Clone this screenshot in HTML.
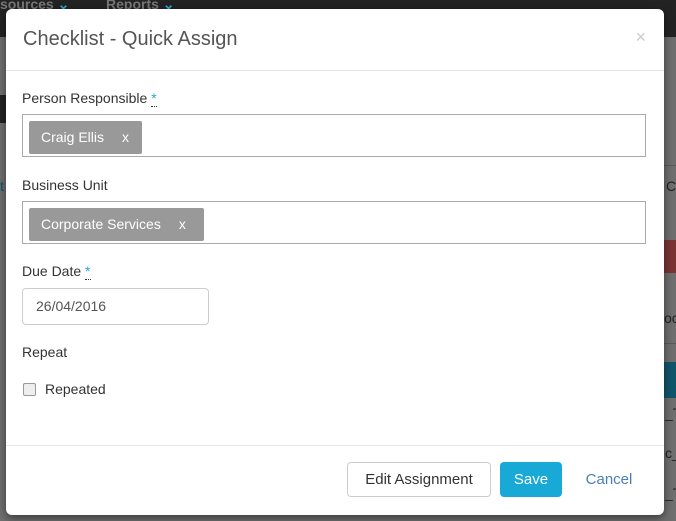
<!DOCTYPE html><html><head><style>
body{margin:0;width:676px;height:521px;overflow:hidden;background:#6f6f6f;font-family:"Liberation Sans",sans-serif;position:relative}
.nav{position:absolute;left:0;top:0;width:676px;height:37px;background:#232323;color:#777;font-size:14px;font-weight:bold}
.m{position:absolute;left:6px;top:9px;width:658px;height:506px;background:#fff;border-radius:6px;box-shadow:0 3px 9px rgba(0,0,0,.5)}
.t{position:absolute;left:17px;top:19px;font-size:20px;color:#555}
.x{position:absolute;right:18px;top:18px;font-size:18px;color:#ccc}
.hr{position:absolute;left:0;width:658px;height:1px;background:#e5e5e5}
.l{position:absolute;left:16px;font-size:14px;color:#333}
.s{color:#29a6d9;border-bottom:1px dotted #333}
.box{position:absolute;left:16px;width:622px;height:41px;border:1px solid #aaa}
.chip{position:absolute;left:6px;top:6px;height:33px;background:#999;color:#fff;border-radius:2px;font-size:14px;line-height:33px;padding:0 12px;box-sizing:border-box}
.chip b{font-weight:normal;margin-left:18px}
.in{position:absolute;left:16px;top:279px;border:1px solid #ccc;border-radius:4px;font-size:14px;color:#555;line-height:35px;padding-left:13px;box-sizing:border-box;width:187px;height:37px}
.btn{position:absolute;top:453px;height:35px;box-sizing:border-box;border-radius:4px;font-size:15px;line-height:33px;text-align:center}
.bg{position:absolute;font-size:14px;color:#222}
</style></head><body>
<div class="nav"><span style="position:absolute;left:0;top:-4px">sources <span style="color:#29a6d9">&#8964;</span></span><span style="position:absolute;left:106px;top:-4px">Reports <span style="color:#29a6d9">&#8964;</span></span></div>
<div style="position:absolute;left:664px;top:165px;width:12px;height:1px;background:#5a5a5a"></div>
<div class="bg" style="left:666px;top:178px">C</div>
<div style="position:absolute;left:664px;top:240px;width:12px;height:33px;background:#7a3434"></div>
<div class="bg" style="left:664px;top:310px">oc</div>
<div style="position:absolute;left:664px;top:343px;width:12px;height:1px;background:#5a5a5a"></div>
<div style="position:absolute;left:664px;top:362px;width:12px;height:36px;background:#10566b"></div>
<div class="bg" style="left:665px;top:405px">_T</div>
<div class="bg" style="left:665px;top:445px">c_</div>
<div class="bg" style="left:665px;top:485px">_T</div>
<div style="position:absolute;left:0;top:95px;width:6px;height:28px;background:#222"></div>
<div class="bg" style="left:0;top:178px;color:#10566b">t</div>
<div class="m">
<div class="t">Checklist - Quick Assign</div><div class="x">×</div>
<div class="hr" style="top:61px"></div>
<div class="l" style="top:81px">Person Responsible <span class="s">*</span></div>
<div class="box" style="top:105px"><div class="chip" style="width:113px">Craig Ellis<b>x</b></div></div>
<div class="l" style="top:168px">Business Unit</div>
<div class="box" style="top:192px"><div class="chip" style="width:175px">Corporate Services<b>x</b></div></div>
<div class="l" style="top:254px">Due Date <span class="s">*</span></div>
<div class="in">26/04/2016</div>
<div class="l" style="top:335px">Repeat</div>
<div style="position:absolute;left:17px;top:374px;width:11px;height:11px;border:1px solid #999;border-radius:2px;background:#eee"></div>
<div class="l" style="left:39px;top:372px">Repeated</div>
<div class="hr" style="top:436px"></div>
<div class="btn" style="left:341px;width:144px;border:1px solid #ccc;color:#333">Edit Assignment</div>
<div class="btn" style="left:494px;width:62px;background:#18a9d7;color:#fff;line-height:35px">Save</div>
<div class="btn" style="left:572px;width:62px;color:#4a7fb5;line-height:35px">Cancel</div>
</div>
</body></html>
